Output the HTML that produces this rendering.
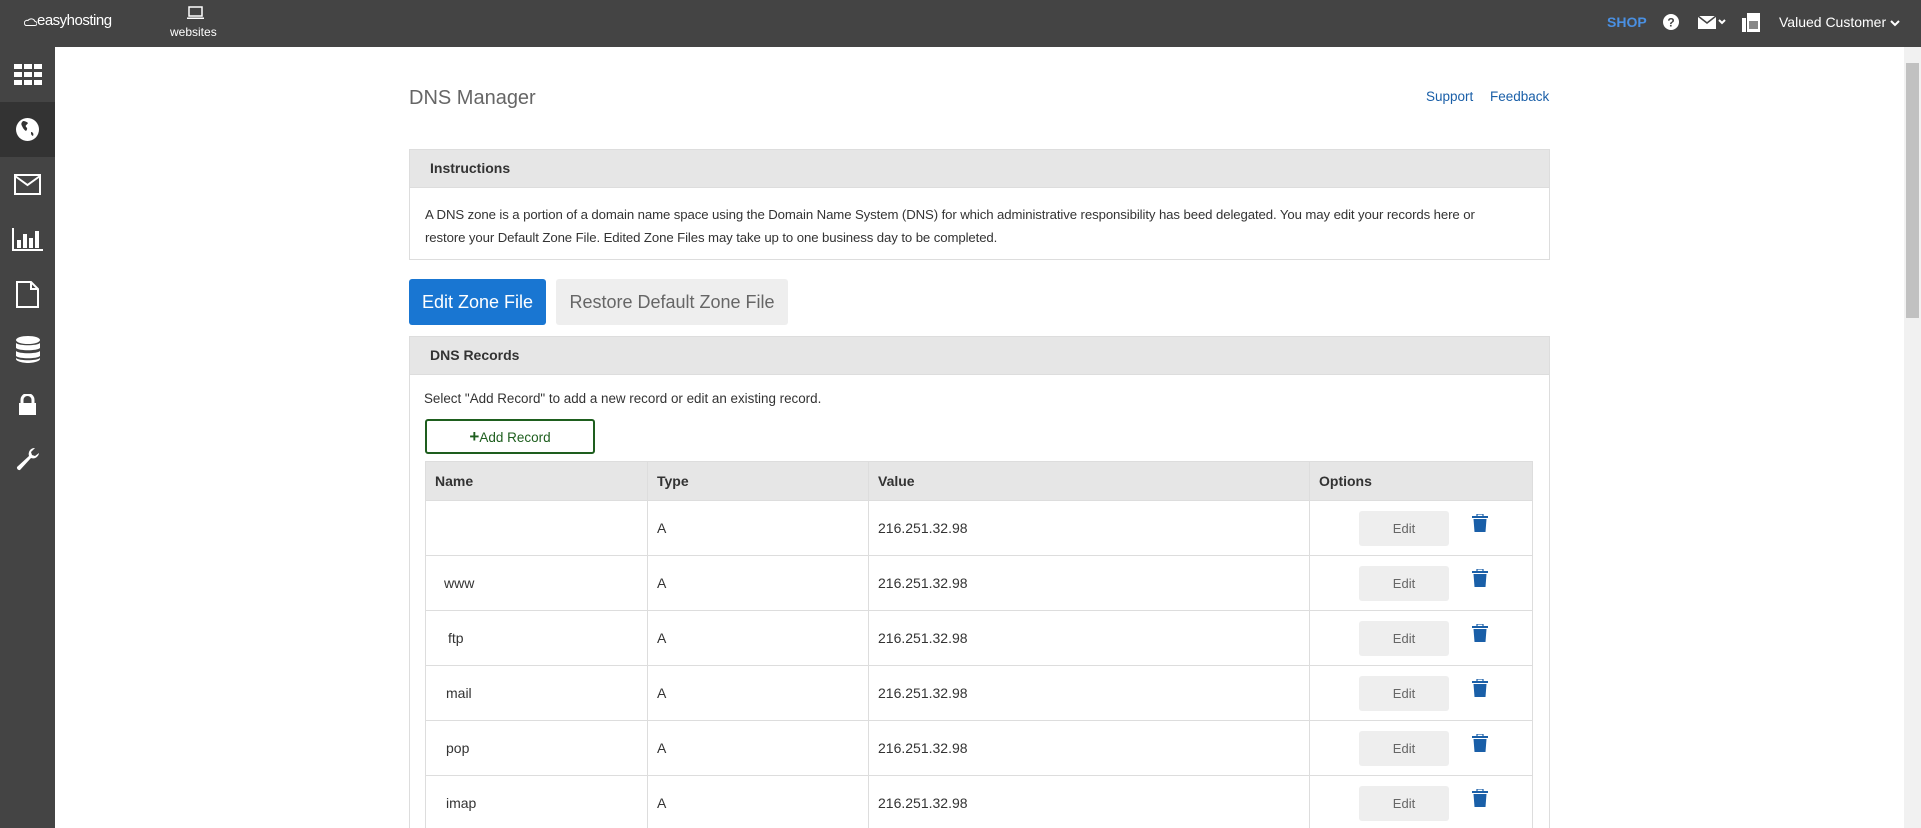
<!DOCTYPE html>
<html><head><style>
*{box-sizing:border-box;margin:0;padding:0}
html,body{width:1921px;height:828px;overflow:hidden}
body{font-family:"Liberation Sans",sans-serif;background:#fff;position:relative;color:#333}
.top{position:absolute;left:0;top:0;width:1921px;height:47px;background:#444}
.side{position:absolute;left:0;top:47px;width:55px;height:781px;background:#444}
.si{height:55px;display:flex;align-items:center;justify-content:center}
.si.act{background:#333}
.scroll{position:absolute;left:1904px;top:47px;width:17px;height:781px;background:#f1f1f1}
.thumb{position:absolute;left:2px;top:16px;width:13px;height:255px;background:#c1c1c1}
.t{position:absolute;white-space:nowrap}
.panel{position:absolute;left:409px;width:1141px;border:1px solid #ddd}
.ph{background:#e6e6e6;height:38px;border-bottom:1px solid #ddd;font-size:14px;font-weight:bold;padding:0 20px;line-height:37px;color:#333}
table{border-collapse:collapse;position:absolute;left:425px;top:461px;width:1108px;font-size:14px}
th{background:#e6e6e6;height:39px;text-align:left;padding-left:9px;border:1px solid #ddd;font-weight:bold;color:#333}
td{height:55px;border:1px solid #ddd;padding-left:9px;color:#333}
.edit{display:inline-block;width:90px;height:35px;background:#eee;border-radius:3px;color:#666;text-align:center;line-height:35px;font-size:13px;margin-left:40px;vertical-align:middle}
.tr{display:inline-block;margin-left:23px;vertical-align:middle;position:relative;top:-5px}
</style></head><body>
<div class="top">
<div class="t" style="left:24px;top:12px;color:#fff;font-size:15px;letter-spacing:-0.5px"><svg width="13" height="9" viewBox="0 0 13 9" style="vertical-align:-1px"><path d="M2 8.5h9a2 2 0 0 0 0-4A4 4 0 0 0 4 3.5a2.5 2.5 0 0 0-2 5z" fill="none" stroke="#fff" stroke-width="1"/></svg>easyhosting</div>
<svg class="t" style="left:186px;top:6px" width="19" height="14" viewBox="0 0 19 14"><rect x="3" y="1" width="13" height="9" fill="none" stroke="#fff" stroke-width="1.5"/><rect x="1" y="11.5" width="17" height="1.5" fill="#fff"/></svg>
<div class="t" style="left:170px;top:25px;color:#fff;font-size:12px">websites</div>
<div class="t" style="left:1607px;top:14px;color:#4a90e2;font-size:14px;font-weight:bold">SHOP</div>
<svg class="t" style="left:1663px;top:14px" width="16" height="16" viewBox="0 0 16 16"><circle cx="8" cy="8" r="8" fill="#fff"/><text x="8" y="12.5" font-size="12" font-weight="bold" text-anchor="middle" fill="#444" font-family="Liberation Sans">?</text></svg>
<svg class="t" style="left:1698px;top:15px" width="32" height="14" viewBox="0 0 32 14"><rect x="0" y="1" width="18" height="13" fill="#fff"/><path d="M0 1l9 7 9-7" fill="none" stroke="#444" stroke-width="1.5"/><path d="M21 5l3 3 3-3" fill="none" stroke="#fff" stroke-width="2"/></svg>
<svg class="t" style="left:1742px;top:13px" width="18" height="19" viewBox="0 0 18 19"><rect x="0" y="5" width="4" height="14" fill="#fff"/><rect x="5" y="0" width="13" height="19" fill="#fff"/><rect x="7" y="8" width="9" height="8" fill="#888"/></svg>
<div class="t" style="left:1779px;top:14px;color:#fff;font-size:14px">Valued Customer <svg width="10" height="8" viewBox="0 0 10 8"><path d="M1 2l4 4 4-4" fill="none" stroke="#fff" stroke-width="2"/></svg></div>
</div>
<div class="side">
<div class="si"><svg width="28" height="21" viewBox="0 0 28 21"><g fill="#fff"><rect x="0" y="0" width="8" height="5"/><rect x="10" y="0" width="8" height="5"/><rect x="20" y="0" width="8" height="5"/><rect x="0" y="8" width="8" height="5"/><rect x="10" y="8" width="8" height="5"/><rect x="20" y="8" width="8" height="5"/><rect x="0" y="16" width="8" height="5"/><rect x="10" y="16" width="8" height="5"/><rect x="20" y="16" width="8" height="5"/></g></svg></div>
<div class="si act"><svg width="23" height="23" viewBox="0 0 23 23"><circle cx="11.5" cy="11.5" r="11.5" fill="#fff"/><path d="M7 3c2 0 4 1 5 2-1 2-3 2-2 4 2 1 1 3 0 4-2-1-3-3-4-5-1-2-1-3 1-5z M15 14c2 0 3 2 2 4-2-1-2-2-2-4z" fill="#333"/></svg></div>
<div class="si"><svg width="27" height="21" viewBox="0 0 27 21"><rect x="1" y="1" width="25" height="19" fill="none" stroke="#fff" stroke-width="2"/><path d="M1 2l12.5 9L26 2" fill="none" stroke="#fff" stroke-width="2"/></svg></div>
<div class="si"><svg width="31" height="23" viewBox="0 0 31 23"><path d="M1 0v22h30" fill="none" stroke="#fff" stroke-width="2"/><rect x="5" y="12" width="4" height="8" fill="#fff"/><rect x="11" y="6" width="4" height="14" fill="#fff"/><rect x="17" y="10" width="4" height="10" fill="#fff"/><rect x="23" y="3" width="4" height="17" fill="#fff"/></svg></div>
<div class="si"><svg width="23" height="27" viewBox="0 0 23 27"><path d="M1 1h14l7 7v18H1z" fill="none" stroke="#fff" stroke-width="2"/><path d="M15 1v7h7" fill="none" stroke="#fff" stroke-width="2"/></svg></div>
<div class="si"><svg width="24" height="27" viewBox="0 0 24 27"><g fill="#fff"><ellipse cx="12" cy="4" rx="12" ry="4"/><path d="M0 7c3 3 21 3 24 0v5c-3 3-21 3-24 0z"/><path d="M0 15c3 3 21 3 24 0v5c-3 3-21 3-24 0z"/><path d="M0 22c3 3 21 3 24 0v1c0 2-6 4-12 4S0 25 0 23z"/></g></svg></div>
<div class="si"><svg width="19" height="21" viewBox="0 0 19 21"><path d="M4 9V6a5.5 5.5 0 0 1 11 0v3" fill="none" stroke="#fff" stroke-width="3"/><rect x="1" y="9" width="17" height="12" fill="#fff"/></svg></div>
<div class="si"><svg width="25" height="25" viewBox="0 0 25 25"><path d="M24 6a6 6 0 0 1-8 5L5 23a2.5 2.5 0 0 1-3-3L14 9a6 6 0 0 1 6-8l-4 4 1 3 3 1z" fill="#fff"/></svg></div>
</div>
<div class="scroll"><div class="thumb"></div></div>

<div class="t" style="left:409px;top:87px;font-size:20px;color:#666">DNS Manager</div>
<div class="t" style="left:1426px;top:89px;font-size:13.5px;color:#1a5fa8">Support</div>
<div class="t" style="left:1490px;top:89px;font-size:13.5px;color:#1a5fa8">Feedback</div>

<div class="panel" style="top:149px;height:111px">
<div class="ph">Instructions</div>
<div style="padding:15px 60px 0 15px;font-size:13.2px;line-height:23px;color:#333;letter-spacing:-0.1px">A DNS zone is a portion of a domain name space using the Domain Name System (DNS) for which administrative responsibility has beed delegated. You may edit your records here or restore your Default Zone File. Edited Zone Files may take up to one business day to be completed.</div>
</div>

<div class="t" style="left:409px;top:279px;width:137px;height:46px;background:#1976d2;border-radius:3px;color:#fff;font-size:18px;line-height:46px;text-align:center">Edit Zone File</div>
<div class="t" style="left:556px;top:279px;width:232px;height:46px;background:#eee;border-radius:3px;color:#666;font-size:18px;line-height:46px;text-align:center">Restore Default Zone File</div>

<div class="panel" style="top:336px;height:492px;border-bottom:none">
<div class="ph">DNS Records</div>
</div>
<div class="t" style="left:424px;top:391px;font-size:13.4px;color:#333">Select "Add Record" to add a new record or edit an existing record.</div>
<div class="t" style="left:425px;top:419px;width:170px;height:35px;border:2px solid #1e5e1e;border-radius:3px;font-size:13.5px;color:#1e5e1e;text-align:center;line-height:31px"><b style="font-size:17px">+</b>Add Record</div>

<table>
<tr><th style="width:222px">Name</th><th style="width:221px">Type</th><th style="width:441px">Value</th><th>Options</th></tr>
<tr><td></td><td>A</td><td>216.251.32.98</td><td><span class="edit">Edit</span><svg class="tr" width="16" height="18" viewBox="0 0 16 18"><rect x="0" y="2" width="16" height="2" fill="#1a5fa8"/><rect x="5" y="0" width="6" height="3" fill="none" stroke="#1a5fa8" stroke-width="1.2"/><path d="M1.5 5h13l-1 13h-11z" fill="#1a5fa8"/></svg></td></tr>
<tr><td style="padding-left:18px">www</td><td>A</td><td>216.251.32.98</td><td><span class="edit">Edit</span><svg class="tr" width="16" height="18" viewBox="0 0 16 18"><rect x="0" y="2" width="16" height="2" fill="#1a5fa8"/><rect x="5" y="0" width="6" height="3" fill="none" stroke="#1a5fa8" stroke-width="1.2"/><path d="M1.5 5h13l-1 13h-11z" fill="#1a5fa8"/></svg></td></tr>
<tr><td style="padding-left:22px">ftp</td><td>A</td><td>216.251.32.98</td><td><span class="edit">Edit</span><svg class="tr" width="16" height="18" viewBox="0 0 16 18"><rect x="0" y="2" width="16" height="2" fill="#1a5fa8"/><rect x="5" y="0" width="6" height="3" fill="none" stroke="#1a5fa8" stroke-width="1.2"/><path d="M1.5 5h13l-1 13h-11z" fill="#1a5fa8"/></svg></td></tr>
<tr><td style="padding-left:20px">mail</td><td>A</td><td>216.251.32.98</td><td><span class="edit">Edit</span><svg class="tr" width="16" height="18" viewBox="0 0 16 18"><rect x="0" y="2" width="16" height="2" fill="#1a5fa8"/><rect x="5" y="0" width="6" height="3" fill="none" stroke="#1a5fa8" stroke-width="1.2"/><path d="M1.5 5h13l-1 13h-11z" fill="#1a5fa8"/></svg></td></tr>
<tr><td style="padding-left:20px">pop</td><td>A</td><td>216.251.32.98</td><td><span class="edit">Edit</span><svg class="tr" width="16" height="18" viewBox="0 0 16 18"><rect x="0" y="2" width="16" height="2" fill="#1a5fa8"/><rect x="5" y="0" width="6" height="3" fill="none" stroke="#1a5fa8" stroke-width="1.2"/><path d="M1.5 5h13l-1 13h-11z" fill="#1a5fa8"/></svg></td></tr>
<tr><td style="padding-left:20px">imap</td><td>A</td><td>216.251.32.98</td><td><span class="edit">Edit</span><svg class="tr" width="16" height="18" viewBox="0 0 16 18"><rect x="0" y="2" width="16" height="2" fill="#1a5fa8"/><rect x="5" y="0" width="6" height="3" fill="none" stroke="#1a5fa8" stroke-width="1.2"/><path d="M1.5 5h13l-1 13h-11z" fill="#1a5fa8"/></svg></td></tr>
</table>
</body></html>
